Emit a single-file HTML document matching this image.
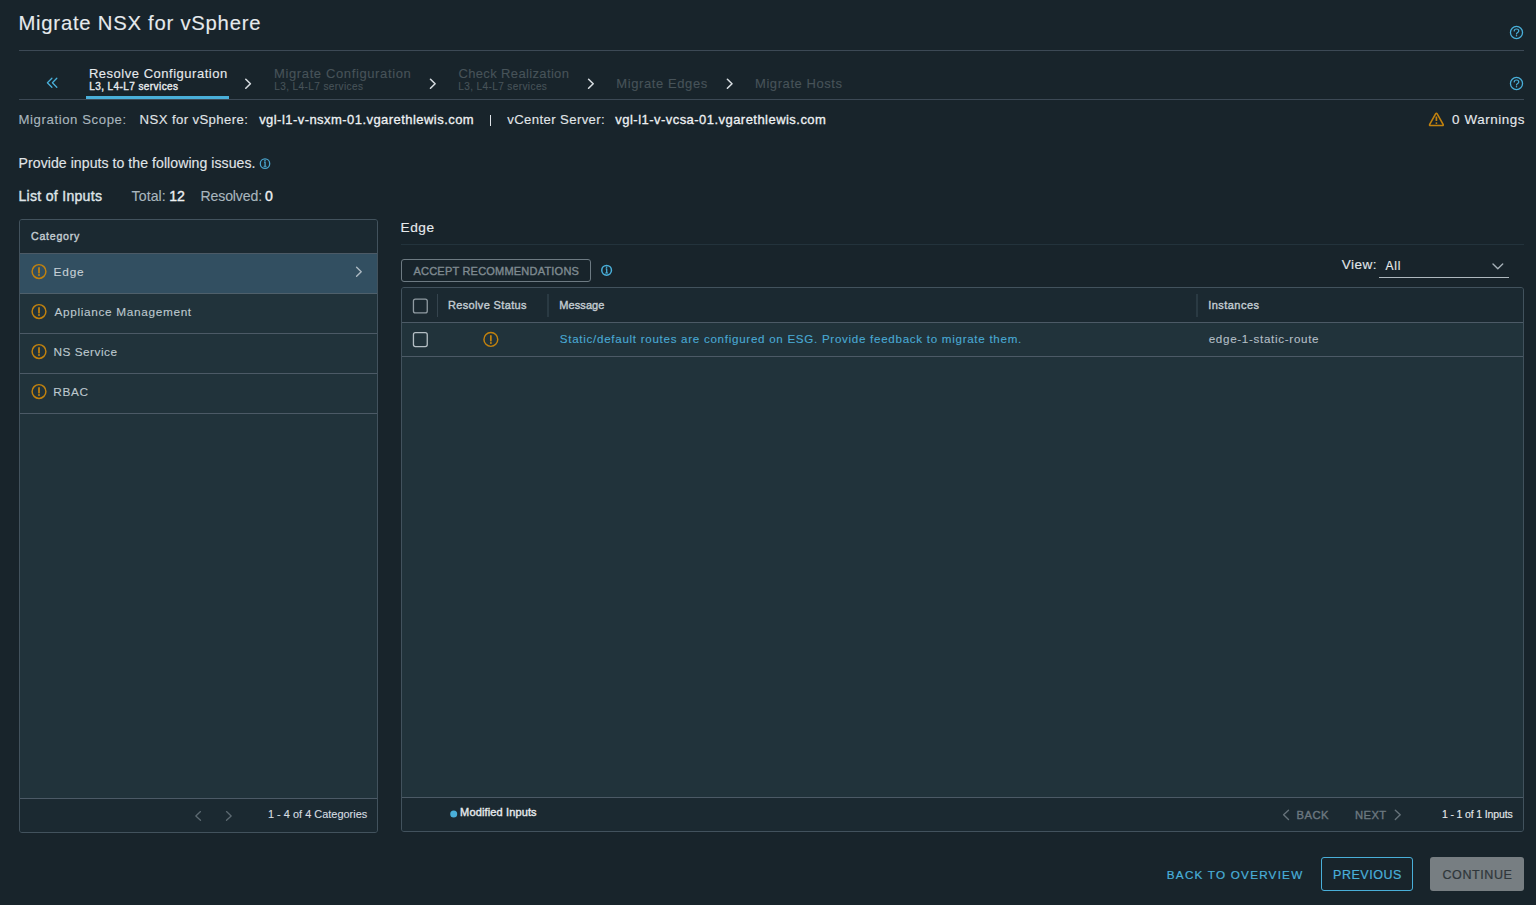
<!DOCTYPE html>
<html><head><meta charset="utf-8">
<style>
*{margin:0;padding:0;box-sizing:border-box}
html,body{width:1536px;height:905px;overflow:hidden;background:#18242b;font-family:"Liberation Sans",sans-serif;color:#adbbc4}
.a{position:absolute}
.t{position:absolute;white-space:nowrap;line-height:1}
</style></head><body>
<div class="a" style="left:19px;top:50px;width:1505px;height:1px;background:#3c4955"></div>
<div class="a" style="left:19px;top:99px;width:1505px;height:1px;background:#3c4955"></div>
<div class="a" style="left:86px;top:96px;width:143px;height:3px;background:#49afd9"></div>
<div class="a" style="left:489.5px;top:115px;width:1.4px;height:11px;background:#dfe4e8"></div>

<!-- left panel -->
<div class="a" style="left:19px;top:219px;width:359px;height:614px;border:1px solid #42525d;border-radius:3px;background:#21333b;overflow:hidden">
  <div class="a" style="left:0;top:0;width:357px;height:34px;background:#1b2931;border-bottom:1px solid #4c5a66"></div>
  <div class="a" style="left:0;top:34px;width:357px;height:40px;background:#324f61;border-bottom:1px solid #4f606b"></div>
  <div class="a" style="left:0;top:74px;width:357px;height:40px;border-bottom:1px solid #4c5a66"></div>
  <div class="a" style="left:0;top:114px;width:357px;height:40px;border-bottom:1px solid #4c5a66"></div>
  <div class="a" style="left:0;top:154px;width:357px;height:40px;border-bottom:1px solid #4c5a66"></div>
  <div class="a" style="left:0;top:578px;width:357px;height:34px;background:#1b2931;border-top:1px solid #4c5a66"></div>
</div>

<!-- right -->
<div class="a" style="left:401px;top:244px;width:1123px;height:1px;background:#23333c"></div>
<div class="a" style="left:401px;top:259px;width:190px;height:23px;border:1px solid #6d7a82;border-radius:3px"></div>
<div class="a" style="left:1379px;top:277px;width:130px;height:1px;background:#aeb8be"></div>

<div class="a" style="left:401px;top:287px;width:1123px;height:545px;border:1px solid #42525d;border-radius:3px;background:#21333b;overflow:hidden">
  <div class="a" style="left:0;top:0;width:1121px;height:35px;background:#1b2931;border-bottom:1px solid #4c5a66"></div>
  <div class="a" style="left:0;top:35px;width:1121px;height:34px;border-bottom:1px solid #4c5a66"></div>
  <div class="a" style="left:0;top:509px;width:1121px;height:34px;background:#1b2931;border-top:1px solid #4c5a66"></div>
  <div class="a" style="left:35px;top:6px;width:1px;height:23px;background:#35444e"></div>
  <div class="a" style="left:145px;top:6px;width:2px;height:23px;background:#2a3a43"></div>
  <div class="a" style="left:794px;top:6px;width:2px;height:23px;background:#2a3a43"></div>
</div>

<!-- bottom buttons -->
<div class="a" style="left:1321px;top:857px;width:92px;height:34px;border:1px solid #49afd9;border-radius:3px"></div>
<div class="a" style="left:1430px;top:857px;width:94px;height:34px;background:#777e82;border-radius:3px"></div>

<svg class="a" style="left:0;top:0" width="1536" height="905" viewBox="0 0 1536 905">
<circle cx="1516.5" cy="32.5" r="6.05" fill="none" stroke="#49afd9" stroke-width="1.3"/><path d="M1514.2 30.9 C1514.2 29.6 1515.2 29.0 1516.5 29.0 C1517.9 29.0 1518.8 29.8 1518.8 30.9 C1518.8 32.3 1516.5 32.5 1516.5 34.0" fill="none" stroke="#49afd9" stroke-width="1.2" stroke-linecap="round"/><circle cx="1516.5" cy="35.8" r="0.75" fill="#49afd9"/>
<circle cx="1516.5" cy="83.5" r="6.05" fill="none" stroke="#49afd9" stroke-width="1.3"/><path d="M1514.2 81.9 C1514.2 80.6 1515.2 80.0 1516.5 80.0 C1517.9 80.0 1518.8 80.8 1518.8 81.9 C1518.8 83.3 1516.5 83.5 1516.5 85.0" fill="none" stroke="#49afd9" stroke-width="1.2" stroke-linecap="round"/><circle cx="1516.5" cy="86.8" r="0.75" fill="#49afd9"/>
<path d="M51.9 78.3 L47.4 82.8 L51.9 87.3 M56.8 78.3 L52.4 82.8 L56.8 87.3" fill="none" stroke="#49afd9" stroke-width="1.3" stroke-linecap="round" stroke-linejoin="round"/>
<path d="M245.8 79.3 L250.4 83.75 L245.8 88.2" fill="none" stroke="#d6dce0" stroke-width="1.6" stroke-linecap="round" stroke-linejoin="round"/>
<path d="M430.5 79.3 L435.1 83.75 L430.5 88.2" fill="none" stroke="#d6dce0" stroke-width="1.6" stroke-linecap="round" stroke-linejoin="round"/>
<path d="M588.6 79.3 L593.2 83.75 L588.6 88.2" fill="none" stroke="#d6dce0" stroke-width="1.6" stroke-linecap="round" stroke-linejoin="round"/>
<path d="M727.4 79.3 L732.0 83.75 L727.4 88.2" fill="none" stroke="#d6dce0" stroke-width="1.6" stroke-linecap="round" stroke-linejoin="round"/>
<path d="M1435.6 113.9 Q1436.4 112.6 1437.2 113.9 L1443.1 124.3 Q1443.7 125.5 1442.3 125.5 L1430.5 125.5 Q1429.1 125.5 1429.7 124.3 Z" fill="none" stroke="#c2820e" stroke-width="1.6" stroke-linejoin="round"/><path d="M1436.4 116.5 L1436.4 121" stroke="#c2820e" stroke-width="1.7"/><circle cx="1436.4" cy="123.1" r="0.95" fill="#c2820e"/>
<circle cx="265" cy="163.65" r="4.7" fill="none" stroke="#4aa3cc" stroke-width="1.3"/><path d="M264.1 162.25 L265.1 162.25 L265.1 166.25" fill="none" stroke="#4aa3cc" stroke-width="1.3" stroke-linejoin="round"/><path d="M263.6 166.35 L266.5 166.35" stroke="#4aa3cc" stroke-width="1"/><circle cx="265" cy="160.65" r="0.8" fill="#4aa3cc"/>
<circle cx="606.6" cy="270.3" r="4.85" fill="none" stroke="#49afd9" stroke-width="1.5"/><path d="M605.7 268.90000000000003 L606.7 268.90000000000003 L606.7 272.90000000000003" fill="none" stroke="#49afd9" stroke-width="1.3" stroke-linejoin="round"/><path d="M605.2 273.0 L608.1 273.0" stroke="#49afd9" stroke-width="1"/><circle cx="606.6" cy="267.3" r="0.8" fill="#49afd9"/>
<circle cx="39" cy="271.5" r="6.9" fill="none" stroke="#c2820e" stroke-width="1.45"/><path d="M39 267.9 L39 272.7" stroke="#c2820e" stroke-width="1.75" stroke-linecap="round"/><circle cx="39" cy="274.95" r="1" fill="#c2820e"/>
<circle cx="39" cy="311.5" r="6.9" fill="none" stroke="#c2820e" stroke-width="1.45"/><path d="M39 307.9 L39 312.7" stroke="#c2820e" stroke-width="1.75" stroke-linecap="round"/><circle cx="39" cy="314.95" r="1" fill="#c2820e"/>
<circle cx="39" cy="351.5" r="6.9" fill="none" stroke="#c2820e" stroke-width="1.45"/><path d="M39 347.9 L39 352.7" stroke="#c2820e" stroke-width="1.75" stroke-linecap="round"/><circle cx="39" cy="354.95" r="1" fill="#c2820e"/>
<circle cx="39" cy="391.5" r="6.9" fill="none" stroke="#c2820e" stroke-width="1.45"/><path d="M39 387.9 L39 392.7" stroke="#c2820e" stroke-width="1.75" stroke-linecap="round"/><circle cx="39" cy="394.95" r="1" fill="#c2820e"/>
<circle cx="490.85" cy="339.45" r="6.9" fill="none" stroke="#c2820e" stroke-width="1.45"/><path d="M490.85 335.84999999999997 L490.85 340.65" stroke="#c2820e" stroke-width="1.75" stroke-linecap="round"/><circle cx="490.85" cy="342.9" r="1" fill="#c2820e"/>
<path d="M356.6 267.2 L361.2 271.7 L356.6 276.2" fill="none" stroke="#aebbc4" stroke-width="1.4" stroke-linecap="round" stroke-linejoin="round"/>
<path d="M200.5 811.6 L195.8 815.9 L200.5 820.2" fill="none" stroke="#5d6a72" stroke-width="1.3" stroke-linecap="round" stroke-linejoin="round"/>
<path d="M226.5 811.6 L231.2 815.9 L226.5 820.2" fill="none" stroke="#5d6a72" stroke-width="1.3" stroke-linecap="round" stroke-linejoin="round"/>
<path d="M1493 264.1 L1497.8 268.8 L1502.7 264.1" fill="none" stroke="#a6b1b8" stroke-width="1.4" stroke-linecap="round" stroke-linejoin="round"/>
<path d="M1288.5 810.3 L1283.6 814.8 L1288.5 819.4" fill="none" stroke="#66727a" stroke-width="1.4" stroke-linecap="round" stroke-linejoin="round"/>
<path d="M1395.3 810.3 L1400.2 814.8 L1395.3 819.4" fill="none" stroke="#66727a" stroke-width="1.4" stroke-linecap="round" stroke-linejoin="round"/>
<rect x="413.45" y="299.05" width="13.8" height="13.9" rx="2" fill="none" stroke="#909ba2" stroke-width="1.3"/>
<rect x="413.45" y="332.65" width="13.8" height="13.9" rx="2" fill="none" stroke="#b4bec4" stroke-width="1.3"/>
<circle cx="453.7" cy="813.9" r="3.5" fill="#49afd9"/>
</svg>
<div class="t" style="left:18.43px;top:12.51px;font-size:20.3px;letter-spacing:0.755px;color:#e6eaed;-webkit-text-stroke:0.12px #e6eaed">Migrate NSX for vSphere</div>
<div class="t" style="left:88.93px;top:66.99px;font-size:13.0px;letter-spacing:0.52px;color:#e6eaed;-webkit-text-stroke:0.12px #e6eaed">Resolve Configuration</div>
<div class="t" style="left:89.18px;top:81.73px;font-size:10.0px;letter-spacing:0.422px;color:#e6eaed;-webkit-text-stroke:0.38px #e6eaed">L3, L4-L7 services</div>
<div class="t" style="left:274.03px;top:66.99px;font-size:13.0px;letter-spacing:0.621px;color:#475359;-webkit-text-stroke:0.12px #475359">Migrate Configuration</div>
<div class="t" style="left:274.28px;top:81.73px;font-size:10.0px;letter-spacing:0.41px;color:#475359;-webkit-text-stroke:0.12px #475359">L3, L4-L7 services</div>
<div class="t" style="left:458.44px;top:66.99px;font-size:13.0px;letter-spacing:0.358px;color:#475359;-webkit-text-stroke:0.12px #475359">Check Realization</div>
<div class="t" style="left:458.28px;top:81.73px;font-size:10.0px;letter-spacing:0.404px;color:#475359;-webkit-text-stroke:0.12px #475359">L3, L4-L7 services</div>
<div class="t" style="left:616.23px;top:77.19px;font-size:13.0px;letter-spacing:0.601px;color:#475359;-webkit-text-stroke:0.12px #475359">Migrate Edges</div>
<div class="t" style="left:755.03px;top:77.19px;font-size:13.0px;letter-spacing:0.571px;color:#475359;-webkit-text-stroke:0.12px #475359">Migrate Hosts</div>
<div class="t" style="left:18.52px;top:113.32px;font-size:13.2px;letter-spacing:0.582px;color:#a9b6be;-webkit-text-stroke:0.12px #a9b6be">Migration Scope:</div>
<div class="t" style="left:139.62px;top:113.32px;font-size:13.2px;letter-spacing:0.378px;color:#e0e5e8;-webkit-text-stroke:0.12px #e0e5e8">NSX for vSphere:</div>
<div class="t" style="left:259.16px;top:113.49px;font-size:13.0px;letter-spacing:0.45px;color:#eef1f3;-webkit-text-stroke:0.3px #eef1f3">vgl-l1-v-nsxm-01.vgarethlewis.com</div>
<div class="t" style="left:507.25px;top:113.32px;font-size:13.2px;letter-spacing:0.366px;color:#e0e5e8;-webkit-text-stroke:0.12px #e0e5e8">vCenter Server:</div>
<div class="t" style="left:615.36px;top:113.49px;font-size:13.0px;letter-spacing:0.46px;color:#eef1f3;-webkit-text-stroke:0.3px #eef1f3">vgl-l1-v-vcsa-01.vgarethlewis.com</div>
<div class="t" style="left:1452.08px;top:113.35px;font-size:13.4px;letter-spacing:0.582px;color:#e6eaed;-webkit-text-stroke:0.12px #e6eaed">0 Warnings</div>
<div class="t" style="left:18.59px;top:155.76px;font-size:14.1px;letter-spacing:0.049px;color:#e0e5e8;-webkit-text-stroke:0.12px #e0e5e8">Provide inputs to the following issues.</div>
<div class="t" style="left:18.49px;top:188.56px;font-size:14.1px;letter-spacing:0.275px;color:#dfe5e8;-webkit-text-stroke:0.38px #dfe5e8">List of Inputs</div>
<div class="t" style="left:131.58px;top:188.56px;font-size:14.1px;letter-spacing:0.088px;color:#a9b6be;-webkit-text-stroke:0.12px #a9b6be">Total:</div>
<div class="t" style="left:169.13px;top:188.56px;font-size:14.1px;letter-spacing:0.0px;color:#eef1f3;-webkit-text-stroke:0.38px #eef1f3">12</div>
<div class="t" style="left:200.54px;top:188.56px;font-size:14.1px;letter-spacing:-0.144px;color:#a9b6be;-webkit-text-stroke:0.12px #a9b6be">Resolved:</div>
<div class="t" style="left:264.95px;top:188.56px;font-size:14.1px;letter-spacing:0.0px;color:#eef1f3;-webkit-text-stroke:0.38px #eef1f3">0</div>
<div class="t" style="left:31.06px;top:230.83px;font-size:10.6px;letter-spacing:0.75px;color:#c3ccd2;-webkit-text-stroke:0.38px #c3ccd2">Category</div>
<div class="t" style="left:53.53px;top:267.21px;font-size:11.8px;letter-spacing:0.85px;color:#c6d0d6;-webkit-text-stroke:0.12px #c6d0d6">Edge</div>
<div class="t" style="left:54.48px;top:307.21px;font-size:11.8px;letter-spacing:0.67px;color:#bdc8ce;-webkit-text-stroke:0.12px #bdc8ce">Appliance Management</div>
<div class="t" style="left:53.53px;top:347.21px;font-size:11.8px;letter-spacing:0.497px;color:#bdc8ce;-webkit-text-stroke:0.12px #bdc8ce">NS Service</div>
<div class="t" style="left:53.33px;top:387.21px;font-size:11.8px;letter-spacing:0.678px;color:#bdc8ce;-webkit-text-stroke:0.12px #bdc8ce">RBAC</div>
<div class="t" style="left:400.48px;top:221.1px;font-size:13.7px;letter-spacing:0.546px;color:#e6eaed;-webkit-text-stroke:0.12px #e6eaed">Edge</div>
<div class="t" style="left:413.48px;top:266.19px;font-size:11.0px;letter-spacing:0.213px;color:#7f8a90;-webkit-text-stroke:0.38px #7f8a90">ACCEPT RECOMMENDATIONS</div>
<div class="t" style="left:1341.64px;top:258.29px;font-size:13.6px;letter-spacing:0.486px;color:#e0e5e8;-webkit-text-stroke:0.12px #e0e5e8">View:</div>
<div class="t" style="left:1385.38px;top:259.84px;font-size:12.0px;letter-spacing:0.895px;color:#e6eaed;-webkit-text-stroke:0.12px #e6eaed">All</div>
<div class="t" style="left:447.9px;top:299.79px;font-size:11.0px;letter-spacing:0.363px;color:#c3ccd2;-webkit-text-stroke:0.38px #c3ccd2">Resolve Status</div>
<div class="t" style="left:559.3px;top:299.59px;font-size:11.0px;letter-spacing:0.076px;color:#c3ccd2;-webkit-text-stroke:0.38px #c3ccd2">Message</div>
<div class="t" style="left:1208.18px;top:299.59px;font-size:11.0px;letter-spacing:0.466px;color:#c3ccd2;-webkit-text-stroke:0.38px #c3ccd2">Instances</div>
<div class="t" style="left:559.77px;top:333.18px;font-size:11.6px;letter-spacing:0.712px;color:#49a9d3;-webkit-text-stroke:0.12px #49a9d3">Static/default routes are configured on ESG. Provide feedback to migrate them.</div>
<div class="t" style="left:1208.71px;top:333.08px;font-size:11.6px;letter-spacing:0.697px;color:#b3bec5;-webkit-text-stroke:0.12px #b3bec5">edge-1-static-route</div>
<div class="t" style="left:267.97px;top:809.37px;font-size:10.9px;letter-spacing:0.028px;color:#d6dde1;-webkit-text-stroke:0.12px #d6dde1">1 - 4 of 4 Categories</div>
<div class="t" style="left:460.1px;top:807.49px;font-size:11.0px;letter-spacing:0.136px;color:#e6eaed;-webkit-text-stroke:0.38px #e6eaed">Modified Inputs</div>
<div class="t" style="left:1296.58px;top:810.12px;font-size:11.2px;letter-spacing:0.482px;color:#6c7880;-webkit-text-stroke:0.38px #6c7880">BACK</div>
<div class="t" style="left:1354.98px;top:810.12px;font-size:11.2px;letter-spacing:0.435px;color:#6c7880;-webkit-text-stroke:0.38px #6c7880">NEXT</div>
<div class="t" style="left:1441.9px;top:808.81px;font-size:10.5px;letter-spacing:-0.136px;color:#e6eaed;-webkit-text-stroke:0.12px #e6eaed">1 - 1 of 1 Inputs</div>
<div class="t" style="left:1166.84px;top:869.09px;font-size:11.7px;letter-spacing:1.229px;color:#49afd9;-webkit-text-stroke:0.22px #49afd9">BACK TO OVERVIEW</div>
<div class="t" style="left:1333.07px;top:868.62px;font-size:12.5px;letter-spacing:0.529px;color:#49afd9;-webkit-text-stroke:0.22px #49afd9">PREVIOUS</div>
<div class="t" style="left:1442.47px;top:868.62px;font-size:12.5px;letter-spacing:0.599px;color:#2f363a;-webkit-text-stroke:0.22px #2f363a">CONTINUE</div>
</body></html>
